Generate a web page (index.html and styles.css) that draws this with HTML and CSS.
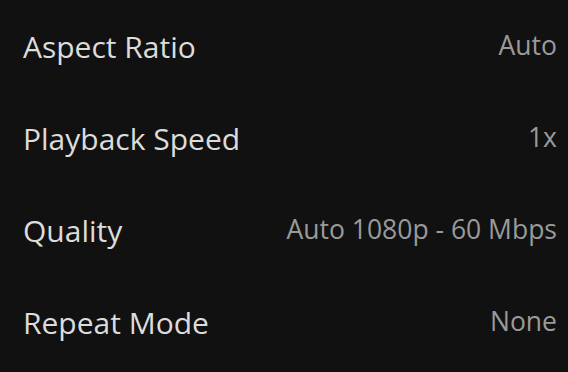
FILE: index.html
```html
<!DOCTYPE html>
<html>
<head>
<meta charset="utf-8">
<link rel="stylesheet" href="styles.css">
</head>
<body>
<div class="list">
  <div class="row"><span class="label">Aspect Ratio</span><span class="value">Auto</span></div>
  <div class="row"><span class="label">Playback Speed</span><span class="value">1x</span></div>
  <div class="row"><span class="label">Quality</span><span class="value">Auto 1080p - 60 Mbps</span></div>
  <div class="row"><span class="label">Repeat Mode</span><span class="value">None</span></div>
</div>
</body>
</html>
```
FILE: styles.css
```css
html, body {
  margin: 0;
  padding: 0;
  background: #111111;
  width: 568px;
  height: 372px;
  overflow: hidden;
}
.list {
  display: flex;
  flex-direction: column;
  padding: 0 11px 0 23px;
  font-family: "Open Sans", sans-serif;
}
.row {
  display: flex;
  justify-content: space-between;
  align-items: flex-start;
  height: 92px;
  padding-top: 27px;
  box-sizing: border-box;
}
.label {
  font-size: 30px;
  line-height: 1.362;
  color: #dcdcdc;
}
.value {
  font-size: 26.5px;
  line-height: 1.362;
  color: #9a9a9a;
}
```
